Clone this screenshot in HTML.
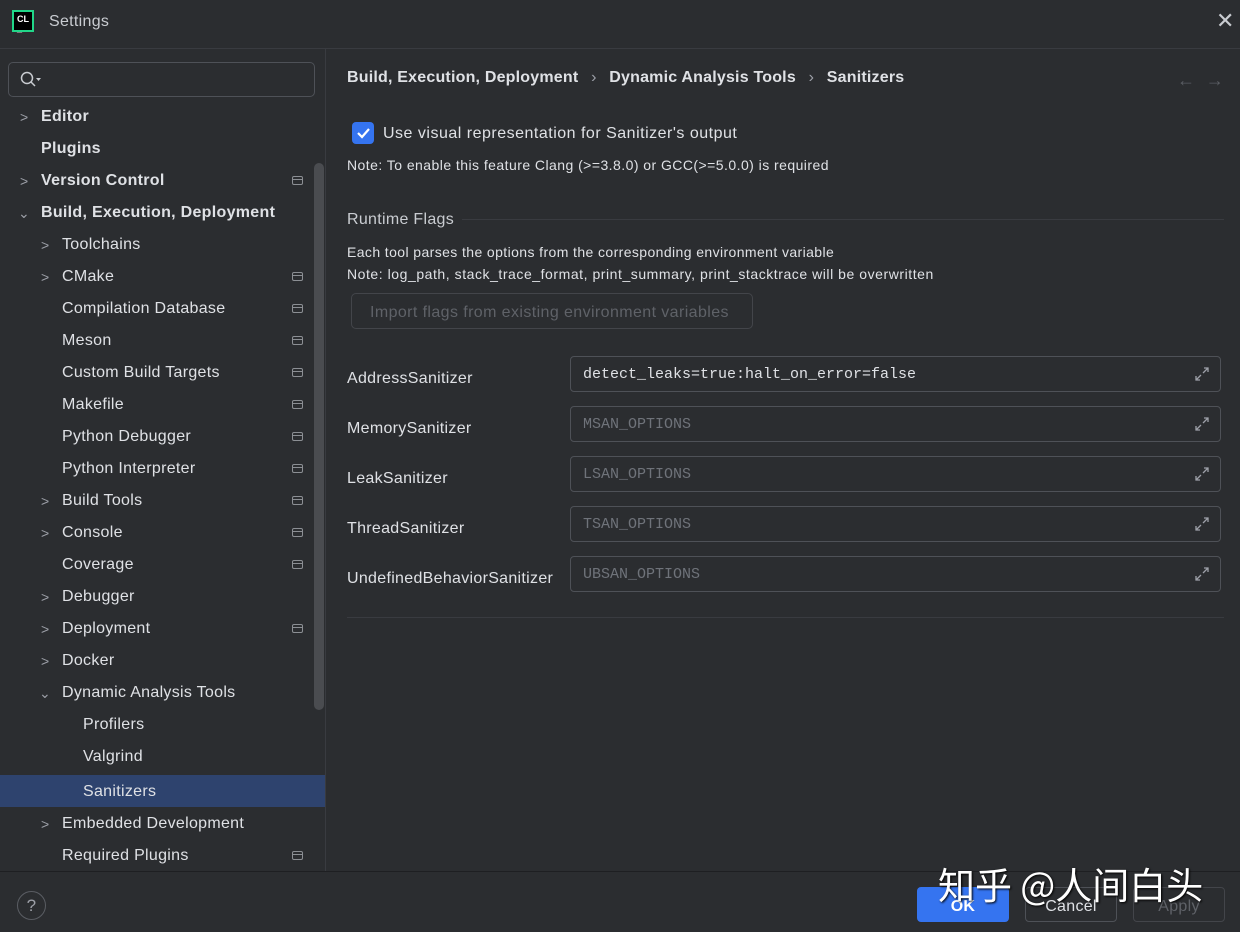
<!DOCTYPE html>
<html><head><style>
*{margin:0;padding:0;box-sizing:border-box}
body{width:1240px;height:932px;background:#2b2d30;font-family:"Liberation Sans","Noto Sans CJK SC",sans-serif;color:#dfe1e5;position:relative;overflow:hidden;font-size:15px;letter-spacing:0.3px}
.a{position:absolute;white-space:nowrap}
.row{position:absolute;left:0;width:325px;height:32px;line-height:34px;font-size:16px}
.chev{position:absolute;top:0;font-size:14px;color:#9da0a8}
.pin{position:absolute;left:292px;top:12px;width:11px;height:9px;border:1.3px solid #8c8f94;border-radius:2px}
.pin:after{content:"";position:absolute;left:0;right:0;top:2px;border-top:1.3px solid #8c8f94}
.fld{position:absolute;left:570px;width:651px;height:36px;border:1px solid #4e5157;border-radius:4px;font-family:"Liberation Mono",monospace;font-size:15px;line-height:35px;padding-left:12px;color:#6f737a;letter-spacing:0}
.lbl{position:absolute;left:347px;font-size:16px}
.exp{position:absolute;right:10px;top:9px;width:16px;height:16px}
.btn{position:absolute;top:887px;width:92px;height:35px;border-radius:4px;border:1px solid #4e5157;text-align:center;line-height:37px;font-size:16px}
</style></head><body>
<div class="a" style="left:0;top:48px;width:1240px;border-top:1px solid #393b40"></div>
<div class="a" style="left:12px;top:10px;width:22px;height:22px;background:#000;border:2px solid #21d789;color:#fff;font-size:9px;font-weight:bold;line-height:10px;padding:2px 0 0 3px;letter-spacing:0">CL<br>_</div>
<div class="a" style="left:49px;top:13px;font-size:16px;color:#c9ccd1">Settings</div>
<div class="a" style="left:1216px;top:8px;font-size:22px;color:#c9ccd1">✕</div>

<div class="a" style="left:8px;top:62px;width:307px;height:35px;border:1px solid #4e5157;border-radius:5px"></div>
<svg class="a" style="left:19px;top:71px" width="24" height="18"><circle cx="8" cy="7" r="5.5" fill="none" stroke="#c9ccd1" stroke-width="1.5"/><line x1="12" y1="11" x2="16" y2="15" stroke="#c9ccd1" stroke-width="1.5"/><path d="M17 7h5l-2.5 3z" fill="#c9ccd1"/></svg>

<div class="a" style="left:325px;top:49px;height:822px;border-left:1px solid #393b40"></div>
<div class="a" style="left:314px;top:163px;width:10px;height:547px;background:#4a4c50;border-radius:5px"></div>
<div class="row" style="top:775px;background:#2e436e"></div>

<div class="row" style="top:100px"><span class="chev" style="left:20px">&gt;</span><b style="position:absolute;left:41px">Editor</b></div>
<div class="row" style="top:132px"><b style="position:absolute;left:41px">Plugins</b></div>
<div class="row" style="top:164px"><span class="chev" style="left:20px">&gt;</span><b style="position:absolute;left:41px">Version Control</b><span class="pin"></span></div>
<div class="row" style="top:196px"><span class="chev" style="left:18px">⌄</span><b style="position:absolute;left:41px">Build, Execution, Deployment</b></div>
<div class="row" style="top:228px"><span class="chev" style="left:41px">&gt;</span><span style="position:absolute;left:62px">Toolchains</span></div>
<div class="row" style="top:260px"><span class="chev" style="left:41px">&gt;</span><span style="position:absolute;left:62px">CMake</span><span class="pin"></span></div>
<div class="row" style="top:292px"><span style="position:absolute;left:62px">Compilation Database</span><span class="pin"></span></div>
<div class="row" style="top:324px"><span style="position:absolute;left:62px">Meson</span><span class="pin"></span></div>
<div class="row" style="top:356px"><span style="position:absolute;left:62px">Custom Build Targets</span><span class="pin"></span></div>
<div class="row" style="top:388px"><span style="position:absolute;left:62px">Makefile</span><span class="pin"></span></div>
<div class="row" style="top:420px"><span style="position:absolute;left:62px">Python Debugger</span><span class="pin"></span></div>
<div class="row" style="top:452px"><span style="position:absolute;left:62px">Python Interpreter</span><span class="pin"></span></div>
<div class="row" style="top:484px"><span class="chev" style="left:41px">&gt;</span><span style="position:absolute;left:62px">Build Tools</span><span class="pin"></span></div>
<div class="row" style="top:516px"><span class="chev" style="left:41px">&gt;</span><span style="position:absolute;left:62px">Console</span><span class="pin"></span></div>
<div class="row" style="top:548px"><span style="position:absolute;left:62px">Coverage</span><span class="pin"></span></div>
<div class="row" style="top:580px"><span class="chev" style="left:41px">&gt;</span><span style="position:absolute;left:62px">Debugger</span></div>
<div class="row" style="top:612px"><span class="chev" style="left:41px">&gt;</span><span style="position:absolute;left:62px">Deployment</span><span class="pin"></span></div>
<div class="row" style="top:644px"><span class="chev" style="left:41px">&gt;</span><span style="position:absolute;left:62px">Docker</span></div>
<div class="row" style="top:676px"><span class="chev" style="left:39px">⌄</span><span style="position:absolute;left:62px">Dynamic Analysis Tools</span></div>
<div class="row" style="top:708px"><span style="position:absolute;left:83px">Profilers</span></div>
<div class="row" style="top:740px"><span style="position:absolute;left:83px">Valgrind</span></div>
<div class="row" style="top:775px"><span style="position:absolute;left:83px">Sanitizers</span></div>
<div class="row" style="top:807px"><span class="chev" style="left:41px">&gt;</span><span style="position:absolute;left:62px">Embedded Development</span></div>
<div class="row" style="top:839px"><span style="position:absolute;left:62px">Required Plugins</span><span class="pin"></span></div>

<div class="a" style="left:347px;top:69px;font-size:16px;font-weight:bold;letter-spacing:0.2px">Build, Execution, Deployment <span style="font-weight:normal;color:#9da0a8;margin:0 8px">›</span> Dynamic Analysis Tools <span style="font-weight:normal;color:#9da0a8;margin:0 8px">›</span> Sanitizers</div>
<div class="a" style="left:1177px;top:70px;font-size:18px;color:#5a5d63">←&nbsp;&nbsp;→</div>

<div class="a" style="left:352px;top:122px;width:22px;height:22px;background:#3574f0;border-radius:4px"></div>
<svg class="a" style="left:352px;top:122px" width="22" height="22"><path d="M6 11l4 4 7-8" fill="none" stroke="#fff" stroke-width="2.2"/></svg>
<div class="a" style="left:383px;top:125px;font-size:16px;letter-spacing:0.5px">Use visual representation for Sanitizer's output</div>
<div class="a" style="left:347px;top:157px;font-size:14px;letter-spacing:0.45px">Note: To enable this feature Clang (&gt;=3.8.0) or GCC(&gt;=5.0.0) is required</div>
<div class="a" style="left:347px;top:211px;font-size:16px;color:#c9ccd1">Runtime Flags</div>
<div class="a" style="left:462px;top:219px;width:762px;border-top:1px solid #393b40"></div>
<div class="a" style="left:347px;top:244px;font-size:14px;letter-spacing:0.4px">Each tool parses the options from the corresponding environment variable</div>
<div class="a" style="left:347px;top:266px;font-size:14px;letter-spacing:0.55px">Note: log_path, stack_trace_format, print_summary, print_stacktrace will be overwritten</div>
<div class="a" style="left:351px;top:293px;width:402px;height:36px;border:1px solid #43454a;border-radius:5px;font-size:16px;color:#5f6268;line-height:37px;padding-left:18px;letter-spacing:0.4px">Import flags from existing environment variables</div>

<div class="lbl" style="top:370px">AddressSanitizer</div>
<div class="fld" style="top:356px;color:#dfe1e5">detect_leaks=true:halt_on_error=false<svg class="exp" viewBox="0 0 16 16"><path d="M10 2h4v4M14 2l-5 5M6 14H2v-4M2 14l5-5" fill="none" stroke="#9da0a8" stroke-width="1.3"/></svg></div>
<div class="lbl" style="top:420px">MemorySanitizer</div>
<div class="fld" style="top:406px">MSAN_OPTIONS<svg class="exp" viewBox="0 0 16 16"><path d="M10 2h4v4M14 2l-5 5M6 14H2v-4M2 14l5-5" fill="none" stroke="#9da0a8" stroke-width="1.3"/></svg></div>
<div class="lbl" style="top:470px">LeakSanitizer</div>
<div class="fld" style="top:456px">LSAN_OPTIONS<svg class="exp" viewBox="0 0 16 16"><path d="M10 2h4v4M14 2l-5 5M6 14H2v-4M2 14l5-5" fill="none" stroke="#9da0a8" stroke-width="1.3"/></svg></div>
<div class="lbl" style="top:520px">ThreadSanitizer</div>
<div class="fld" style="top:506px">TSAN_OPTIONS<svg class="exp" viewBox="0 0 16 16"><path d="M10 2h4v4M14 2l-5 5M6 14H2v-4M2 14l5-5" fill="none" stroke="#9da0a8" stroke-width="1.3"/></svg></div>
<div class="lbl" style="top:570px">UndefinedBehaviorSanitizer</div>
<div class="fld" style="top:556px">UBSAN_OPTIONS<svg class="exp" viewBox="0 0 16 16"><path d="M10 2h4v4M14 2l-5 5M6 14H2v-4M2 14l5-5" fill="none" stroke="#9da0a8" stroke-width="1.3"/></svg></div>
<div class="a" style="left:347px;top:617px;width:877px;border-top:1px solid #393b40"></div>

<div class="a" style="left:0;top:871px;width:1240px;border-top:1px solid #1e1f22"></div>
<div class="a" style="left:17px;top:891px;width:29px;height:29px;border:1px solid #5a5d63;border-radius:50%;text-align:center;line-height:27px;font-size:17px;color:#9da0a8">?</div>
<div class="btn" style="left:917px;background:#3574f0;border-color:#3574f0;color:#fff;font-weight:bold">OK</div>
<div class="btn" style="left:1025px">Cancel</div>
<div class="btn" style="left:1133px;color:#5f6268;border-color:#43454a">Apply</div>
<div class="a" style="left:938px;top:856px;font-size:37px;color:#fff;text-shadow:1px 1px 2px #000;font-family:'Noto Sans CJK SC',sans-serif;letter-spacing:0">知乎 @人间白头</div>
</body></html>
